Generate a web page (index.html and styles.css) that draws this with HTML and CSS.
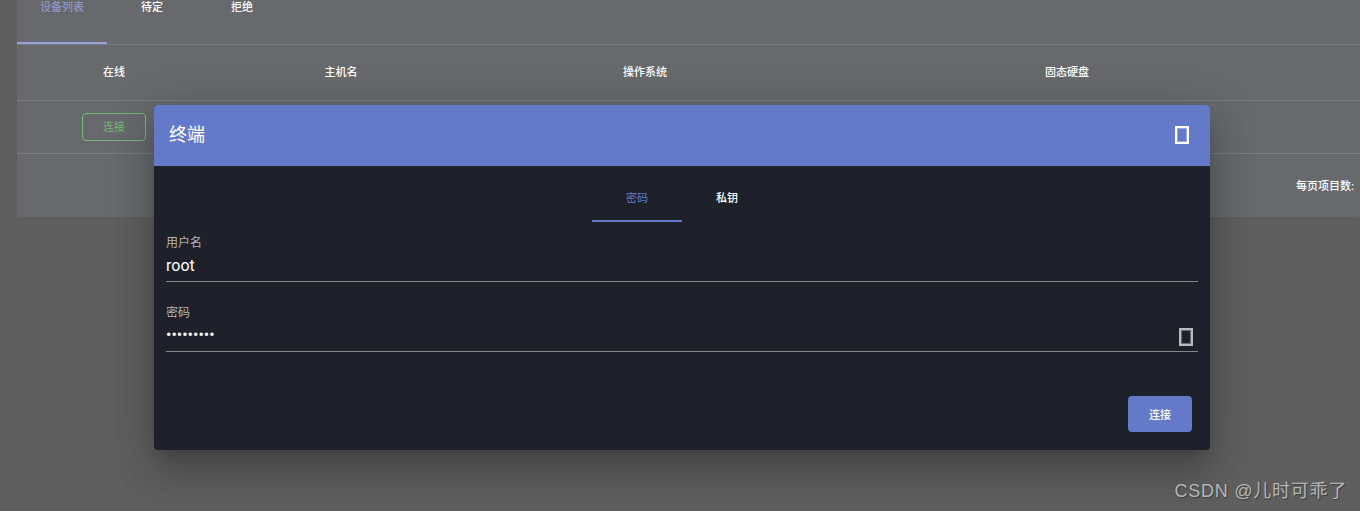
FILE: index.html
```html
<!DOCTYPE html>
<html lang="zh">
<head>
    <meta charset="UTF-8">
    <title>设备列表</title>
    <link rel="stylesheet" href="styles.css">
</head>
<body>
    <div class="card">
        <div class="tabs">
            <div class="tab active">设备列表</div>
            <div class="tab">待定</div>
            <div class="tab">拒绝</div>
        </div>
        <div class="t-row head">
            <div>在线</div>
            <div>主机名</div>
            <div>操作系统</div>
            <div>固态硬盘</div>
        </div>
        <div class="t-row body-row">
            <div><button class="btn-link">连接</button></div>
        </div>
        <div class="pager">每页项目数:</div>
    </div>

    <div class="dialog">
        <div class="dialog-title">
            <span>终端</span>
            <i class="icon icon-title"></i>
        </div>
        <div class="dialog-tabs">
            <div class="d-tab active">密码</div>
            <div class="d-tab">私钥</div>
        </div>
        <div class="field">
            <label>用户名</label>
            <div class="field-value">root</div>
        </div>
        <div class="field">
            <label>密码</label>
            <div class="field-value dots">
                <span>•••••••••</span>
                <i class="icon icon-eye"></i>
            </div>
        </div>
        <div class="dialog-foot">
            <button class="btn-connect">连接</button>
        </div>
    </div>

    <div class="mark">CSDN @儿时可乖了</div>
</body>
</html>
```

FILE: styles.css
```css
html, body {
    height: 100%;
}
body {
    margin: 0;
    background: #5f5f5f;
    color: #fff;
    font-family: Roboto, "Liberation Sans", "Noto Sans CJK SC", sans-serif;
    font-size: 11px;
    overflow: hidden;
}
.card {
    margin-left: 17px;
    height: 217px;
    background: #68696c;
    border-radius: 0 0 4px 4px;
}
.tabs {
    display: flex;
    height: 44px;
    border-bottom: 1px solid #7a7b7e;
}
.tab {
    width: 90px;
    height: 44px;
    box-sizing: border-box;
    text-align: center;
    line-height: 16px;
    font-weight: 500;
}
.tab.active {
    color: #959fd8;
    font-weight: 400;
    border-bottom: 2px solid #959fd8;
}
.t-row {
    display: grid;
    grid-template-columns: 194px 260px 348px 496px;
    text-align: center;
    border-bottom: 1px solid #7a7b7e;
}
.head {
    height: 55px;
    line-height: 55px;
    font-weight: 500;
}
.body-row {
    height: 52px;
    align-items: center;
}
.btn-link {
    display: block;
    width: 64px;
    height: 28px;
    margin: 0 auto;
    padding: 0 0 2px;
    background: none;
    border: 1px solid #74b978;
    border-radius: 4px;
    color: #74b978;
    font: inherit;
}
.pager {
    display: flex;
    justify-content: flex-end;
    align-items: center;
    height: 62px;
    padding-right: 6px;
    font-weight: 500;
}

/* dialog over the page */
.dialog {
    position: absolute;
    left: 154px;
    top: 105px;
    width: 1056px;
    height: 345px;
    background: #1e2129;
    border-radius: 4px;
    box-shadow: 0 11px 15px -7px rgba(0,0,0,.2), 0 24px 38px 3px rgba(0,0,0,.14), 0 9px 46px 8px rgba(0,0,0,.12);
}
.dialog-title {
    display: flex;
    justify-content: space-between;
    align-items: center;
    box-sizing: border-box;
    height: 61px;
    padding: 0 21px 1px 15px;
    background: #6479c9;
    border-radius: 4px 4px 0 0;
    font-size: 18px;
}
.dialog-title span {
    margin-top: -4px;
}
.icon {
    display: block;
    box-sizing: border-box;
    width: 14px;
    height: 18px;
    border: 2px solid #fff;
    box-shadow: inset 0 0 0 1px rgba(255,255,255,.35);
}
.icon-eye {
    border-color: #b9babc;
    box-shadow: inset 0 0 0 1px rgba(185,186,188,.5);
}
.dialog-tabs {
    display: flex;
    justify-content: center;
    height: 56px;
}
.d-tab {
    width: 90px;
    height: 56px;
    box-sizing: border-box;
    text-align: center;
    line-height: 66px;
    font-weight: 500;
}
.d-tab.active {
    color: #6479c9;
    font-weight: 400;
    border-bottom: 2px solid #6479c9;
}
.field {
    height: 47px;
    margin: 12px 12px 22px;
    border-bottom: 1px solid #85868a;
}
.field label {
    display: block;
    height: 19px;
    line-height: 19px;
    font-size: 12px;
    color: #b4b5b8;
}
.field-value {
    display: flex;
    justify-content: space-between;
    align-items: center;
    height: 24px;
    padding-top: 1px;
    font-size: 16px;
    line-height: 24px;
}
.dots {
    padding-top: 0;
}
.dots .icon {
    margin: 3px 5px 0 0;
}
.dialog-foot {
    display: flex;
    justify-content: flex-end;
    padding: 0 18px;
    margin-top: 44px;
}
.btn-connect {
    width: 64px;
    height: 36px;
    padding: 0;
    border: 0;
    border-radius: 4px;
    background: #6479c9;
    color: #fff;
    font: inherit;
    font-weight: 500;
}
.mark {
    position: absolute;
    right: 13px;
    top: 479px;
    font-family: "Liberation Sans", "Noto Sans CJK SC", sans-serif;
    font-size: 18px;
    letter-spacing: .75px;
    line-height: 24px;
    color: #b5b5b5;
    text-shadow: 1px 1px 1px #3c3c3c;
}
```
